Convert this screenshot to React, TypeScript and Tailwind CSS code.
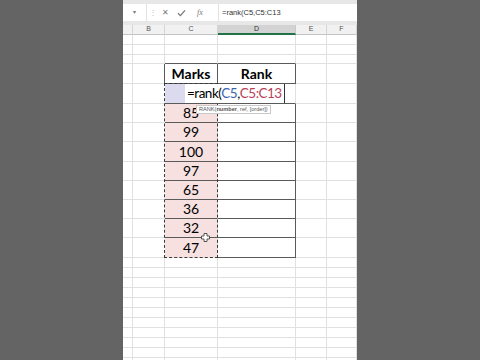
import React from "react";

const cols = [10, 32, 53, 78, 31, 30];
const rowHeights = [10, 10, 9, 20, 20, 19, 19, 20, 19, 19, 19, 19, 20, 10, 10, 10, 10, 10, 10, 10, 10, 10, 10, 10];
const marks = ["", "85", "99", "100", "97", "65", "36", "32", "47"];

function rightColor(r: number, c: number): string {
  if (r === 3 && (c === 1 || c === 2 || c === 3)) return "border-r-[#5a5a5a]";
  if (c === 3 && r >= 5 && r <= 12) return "border-r-[#5a5a5a]";
  if ((c === 1 || c === 2) && r >= 4 && r <= 12) return "border-r-transparent";
  return "border-r-[#e0e0e0]";
}

function bottomColor(r: number, c: number): string {
  if (c === 2 && r === 12) return "border-b-transparent";
  if ((c === 2 || c === 3) && r >= 2 && r <= 12) return "border-b-[#5a5a5a]";
  return "border-b-[#e0e0e0]";
}

function cellBg(r: number, c: number): string {
  if (c === 2 && r === 4) return "bg-[#dcdaee]";
  if (c === 2 && r >= 5 && r <= 12) return "bg-[#f6e0e0]";
  return "bg-white";
}

function cellText(r: number, c: number): React.ReactNode {
  if (r === 3 && c === 2) return <span className="font-bold">Marks</span>;
  if (r === 3 && c === 3) return <span className="font-bold">Rank</span>;
  if (c === 2 && r >= 5 && r <= 12) return marks[r - 4];
  return null;
}

export default function App() {
  const headers = ["", "B", "C", "D", "E", "F"];
  return (
    <div className="w-[480px] h-[360px] flex bg-[#646464] overflow-hidden">
      <div className="w-[123px] shrink-0" />
      <div
        className="relative w-[234px] h-[360px] shrink-0 bg-white flex flex-col overflow-hidden"
        style={{ fontFamily: "Lato, 'Open Sans', sans-serif" }}
      >
        <div className="h-[4px] shrink-0 bg-[#e7e7e7]" />
        {/* formula bar */}
        <div className="h-[17px] shrink-0 flex items-center bg-white text-[#777]" style={{ fontFamily: "'Liberation Sans', sans-serif" }}>
          <div className="w-[24px] h-full flex items-center justify-center border-r border-[#e2e2e2] text-[6px]">▾</div>
          <div className="w-[12px] h-full flex items-center justify-center text-[8px] text-[#bbb] leading-none">⋮</div>
          <div className="w-[13px] h-full flex items-center justify-center text-[8px]">✕</div>
          <div className="w-[19px] h-full flex items-center justify-center">
            <svg width="9" height="8" viewBox="0 0 9 8"><path d="M1 4.2 L3.4 6.6 L8 1.4" fill="none" stroke="#777" strokeWidth="1.3" /></svg>
          </div>
          <div className="w-[18px] h-full flex items-center justify-center text-[8px] italic" style={{ fontFamily: "'Liberation Serif', serif" }}>fx</div>
          <div className="w-[10px] h-full border-r border-[#e2e2e2]" />
          <div className="flex-1 pl-[3px] text-[7.5px] text-[#333] leading-none">=rank(C5,C5:C13</div>
        </div>
        <div className="h-[4px] shrink-0 bg-[#e7e7e7]" />
        {/* column headers */}
        <div className="h-[10px] flex shrink-0" style={{ fontFamily: "'Liberation Sans', sans-serif" }}>
          {cols.map((w, c) => (
            <div
              key={c}
              style={{ width: w }}
              className={
                c === 3
                  ? "h-full box-border border-r border-r-[#c8c8c8] border-b-2 border-b-[#217346] bg-[#d3d3d3] flex items-center justify-center text-[7px] text-[#333]"
                  : "h-full box-border border-r border-r-[#d4d4d4] border-b border-b-[#c4c4c4] bg-[#f1f1f1] flex items-center justify-center text-[7px] text-[#555]"
              }
            >
              {headers[c]}
            </div>
          ))}
        </div>
        {/* grid */}
        {rowHeights.map((h, r) => (
          <div key={r} className="flex shrink-0" style={{ height: h }}>
            {cols.map((w, c) => (
              <div
                key={c}
                style={{ width: w }}
                className={`h-full box-border border-r border-b ${rightColor(r, c)} ${bottomColor(r, c)} ${cellBg(r, c)} flex items-center justify-center text-[14px] text-black leading-none`}
              >
                {cellText(r, c)}
              </div>
            ))}
          </div>
        ))}

        {/* marching ants around C5:C13 */}
        <div className="absolute left-[41px] top-[83px] w-[54px] h-[175px] border border-dashed border-[#3a3a3a] pointer-events-none" />

        {/* in-cell editor */}
        <div className="absolute left-[62px] top-[84px] w-[100px] h-[19px] bg-white border-r border-[#333] flex items-center pl-[2px] text-[13.5px] leading-none text-black tracking-[-0.5px] whitespace-nowrap overflow-hidden">
          <span>=rank(</span>
          <span className="text-[#3b66b0]">C5</span>
          <span>,</span>
          <span className="text-[#b8425a]">C5:C13</span>
        </div>

        {/* function tooltip */}
        <div
          className="absolute left-[73px] top-[105px] h-[9px] px-[2px] bg-white border border-[#c8c8c8] flex items-center text-[5.6px] text-[#555] leading-none whitespace-nowrap"
          style={{ fontFamily: "'Liberation Sans', sans-serif" }}
        >
          RANK(<span className="font-bold">number</span>, ref, [order])
        </div>

        {/* cell cursor */}
        <svg className="absolute left-[78px] top-[233px]" width="9" height="9" viewBox="0 0 9 9">
          <path d="M3 0.5 H6 V3 H8.5 V6 H6 V8.5 H3 V6 H0.5 V3 H3 Z" fill="#fff" stroke="#444" strokeWidth="0.9" />
        </svg>
      </div>
      <div className="flex-1" />
    </div>
  );
}
